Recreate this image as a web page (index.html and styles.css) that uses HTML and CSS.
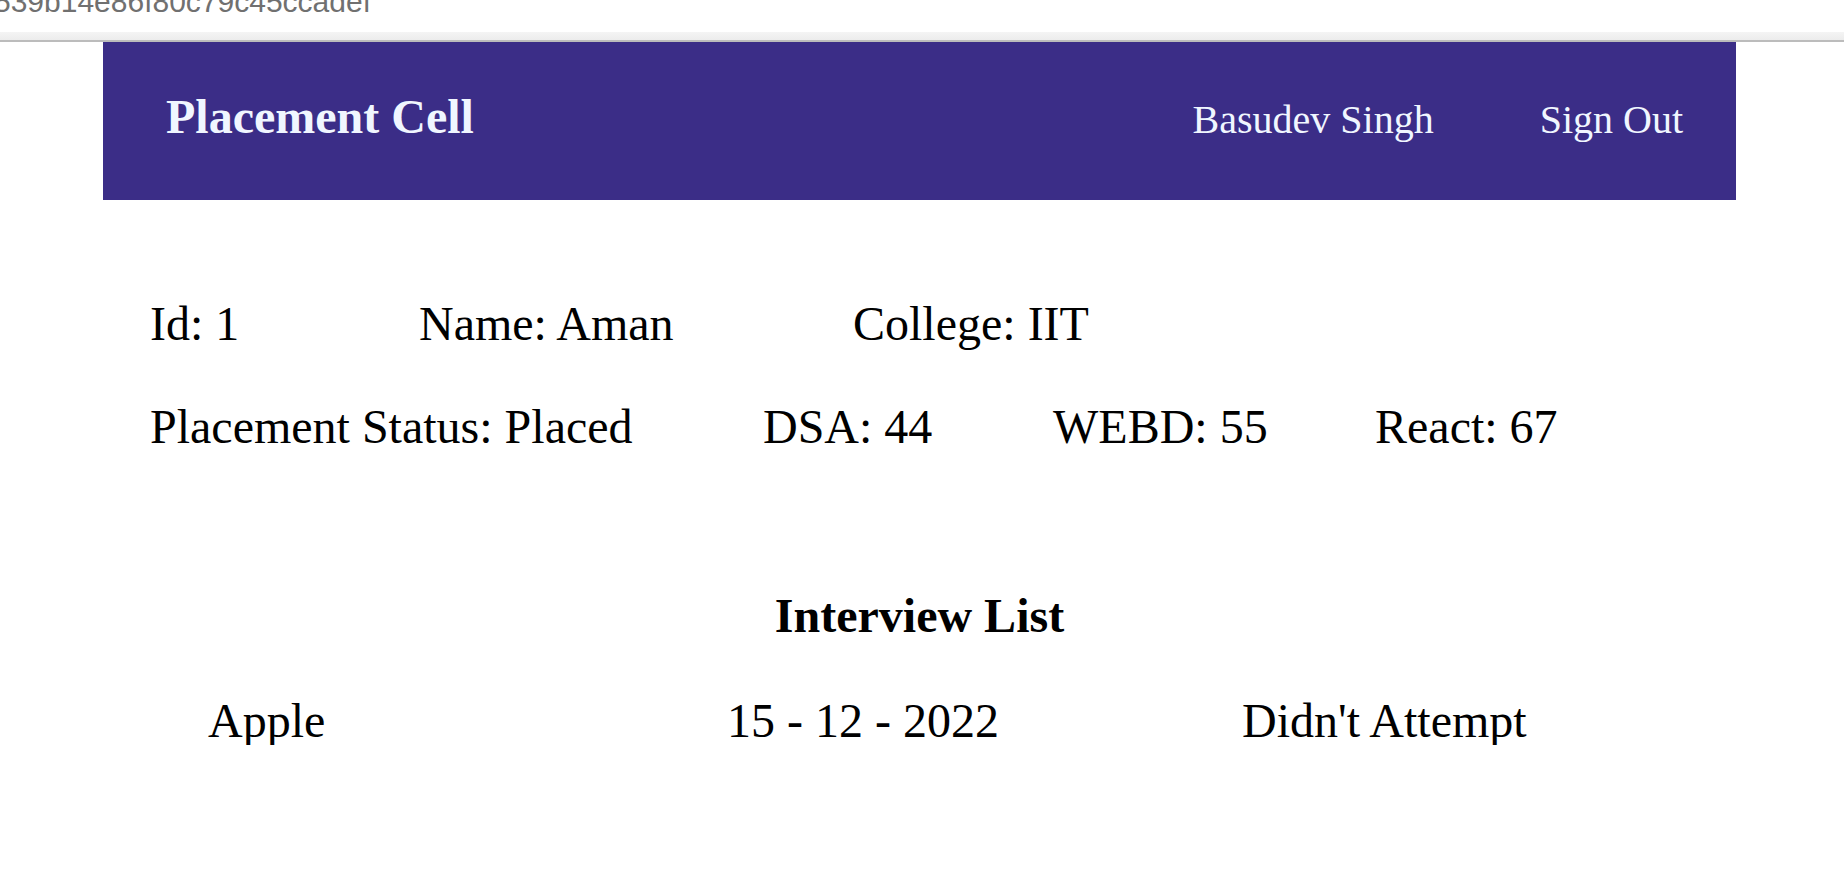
FILE: index.html
```html
<!DOCTYPE html>
<html lang="en">
<head>
<meta charset="utf-8">
<title>Placement Cell</title>
<link rel="stylesheet" href="styles.css">
</head>
<body>
<div class="chrome"><div class="url">539b14e86f80c79c45ccadef</div></div>
<div class="chrome-band"></div>
<div class="chrome-line"></div>
<header class="topbar">
  <h1 class="brand">Placement Cell</h1>
  <nav class="nav">
    <a href="#">Basudev Singh</a>
    <a href="#">Sign Out</a>
  </nav>
</header>
<main class="content">
  <section class="student">
    <div class="row row-1">
      <span>Id: 1</span>
      <span>Name: Aman</span>
      <span>College: IIT</span>
    </div>
    <div class="row row-2">
      <span>Placement Status: Placed</span>
      <span>DSA: 44</span>
      <span>WEBD: 55</span>
      <span>React: 67</span>
    </div>
  </section>
  <section class="interviews">
    <h2 class="section-title">Interview List</h2>
    <div class="interview">
      <span>Apple</span>
      <span>15 - 12 - 2022</span>
      <span>Didn't Attempt</span>
    </div>
  </section>
</main>
</body>
</html>
```

FILE: styles.css
```css
body {
  margin: 0;
  font-family: "Liberation Serif", "Times New Roman", serif;
  color: #000;
  background: #fff;
}

.chrome {
  height: 32px;
  overflow: hidden;
  background: #fff;
}

.url {
  font-family: "Liberation Sans", Arial, sans-serif;
  font-size: 30px;
  line-height: 30px;
  color: #707070;
  margin: -13px 0 0 -6px;
  white-space: nowrap;
}

.chrome-band {
  height: 8px;
  background: linear-gradient(#f4f4f4, #ececec);
}

.chrome-line {
  height: 2px;
  background: #bcbcbc;
}

.topbar {
  display: flex;
  align-items: baseline;
  justify-content: space-between;
  box-sizing: border-box;
  height: 158px;
  margin: 0 108px 0 103px;
  padding: 51px 53px 0 63px;
  background: #3b2d87;
}

.brand {
  margin: 0;
  font-size: 48px;
  line-height: 48px;
  font-weight: bold;
  color: #f0f6ff;
}

.nav {
  display: flex;
  gap: 106px;
}

.nav a {
  font-size: 40px;
  line-height: 40px;
  color: #f0f6ff;
  text-decoration: none;
}

.content {
  margin: 0 108px 0 103px;
}

.student {
  padding: 100px 0 0 47px;
}

.row {
  display: grid;
  font-size: 48px;
  line-height: 48px;
}

.row-1 {
  grid-template-columns: 269px 434px auto;
}

.row-2 {
  grid-template-columns: 613px 290px 322px auto;
  margin-top: 55px;
}

.section-title {
  margin: 141px 0 0;
  text-align: center;
  font-size: 48px;
  line-height: 48px;
  font-weight: bold;
}

.interview {
  display: grid;
  grid-template-columns: 519px 515px auto;
  padding-left: 105px;
  margin-top: 57px;
  font-size: 48px;
  line-height: 48px;
}
```
